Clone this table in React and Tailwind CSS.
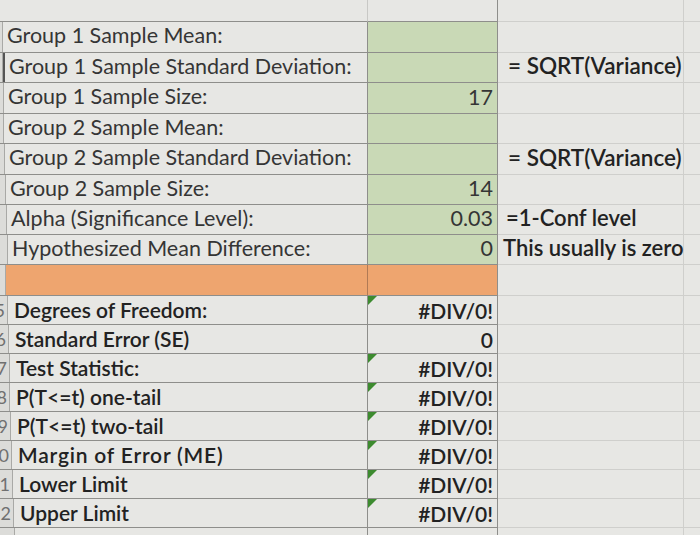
import React from "react";

const topRows = [
  { hw: "w-[3px]", label: "Group 1 Sample Mean:", value: "", note: "", h: "h-[31px]", sel: false },
  { hw: "w-[3px]", label: "Group 1 Sample Standard Deviation:", value: "", note: "= SQRT(Variance)", nc: "text-[22.5px] pl-[10px]", h: "h-[30px]", sel: true },
  { hw: "w-[4px]", label: "Group 1 Sample Size:", value: "17", note: "", h: "h-[31px]" },
  { hw: "w-[4px]", label: "Group 2 Sample Mean:", value: "", note: "", h: "h-[30px]" },
  { hw: "w-[5px]", label: "Group 2 Sample Standard Deviation:", value: "", note: "= SQRT(Variance)", nc: "text-[22.5px] pl-[10px]", h: "h-[31px]" },
  { hw: "w-[6px]", label: "Group 2 Sample Size:", value: "14", note: "", h: "h-[30px]" },
  { hw: "w-[7px]", label: "Alpha (Significance Level):", value: "0.03", note: "=1-Conf level", nc: "text-[22px] pl-[8px]", h: "h-[30px]" },
  { hw: "w-[8px]", label: "Hypothesized Mean Difference:", value: "0", note: "This usually is zero", nc: "text-[22px] pl-[5px]", h: "h-[30px]" },
];

const bottomRows = [
  { hw: "w-[8px]", d: "5", label: "Degrees of Freedom:", value: "#DIV/0!", tri: true },
  { hw: "w-[9px]", d: "6", label: "Standard Error (SE)", value: "0", tri: false },
  { hw: "w-[10px]", d: "7", label: "Test Statistic:", value: "#DIV/0!", tri: true },
  { hw: "w-[10px]", d: "8", label: "P(T<=t) one-tail", value: "#DIV/0!", tri: true },
  { hw: "w-[11px]", d: "9", label: "P(T<=t) two-tail", value: "#DIV/0!", tri: true },
  { hw: "w-[12px]", d: "0", label: "Margin of Error (ME)", value: "#DIV/0!", tri: true, lc: "tracking-[0.8px]" },
  { hw: "w-[13px]", d: "1", label: "Lower Limit", value: "#DIV/0!", tri: true },
  { hw: "w-[14px]", d: "2", label: "Upper Limit", value: "#DIV/0!", tri: true },
  { hw: "w-[15px]", d: "3", label: "", value: "", tri: false },
];

function Header({ hw, d }) {
  return (
    <span className={`${hw} shrink-0 h-full overflow-hidden bg-[#dcdcd9] border-r border-[#a9a9a6] flex items-center justify-end pr-[2px] text-[18px] leading-none text-[#707070]`}>
      {d ? <span className="shrink-0">{d}</span> : null}
    </span>
  );
}

export default function App() {
  return (
    <div className="w-[700px] h-[535px] overflow-hidden bg-[#e7e7e4] font-['Lato','Liberation_Sans',sans-serif] text-[#353535]">
      {/* top blank row */}
      <div className="grid grid-cols-[367px_131px_186px_1fr] h-[22px]">
        <div className="border-b border-[#8e8e8b]" />
        <div className="border-b border-l border-r border-[#8e8e8b] border-l-[#c8c8c5]" />
        <div className="border-b border-r border-[#cfcfcc]" />
        <div className="border-b border-[#cfcfcc]" />
      </div>

      {topRows.map((r, i) => (
        <div key={i} className={`grid grid-cols-[367px_131px_186px_1fr] ${r.h}`}>
          <div className="flex h-full border-b border-[#8e8e8b] overflow-hidden">
            <Header hw={r.hw} />
            <span className={`flex items-center pl-[4px] pb-[2px] text-[21.5px] leading-none whitespace-nowrap ${r.sel ? "border-l-2 border-[#555]" : ""}`}>
              {r.label}
            </span>
          </div>
          <div className="flex items-end justify-end pr-[4px] pb-[5px] bg-[#c9d9b6] border-l border-r border-b border-[#8e8e8b] text-[21.5px] leading-none">
            {r.value}
          </div>
          <div className={`flex items-end pb-[5px] border-b border-r border-[#cfcfcc] leading-none font-semibold text-[#222] whitespace-nowrap ${r.nc || ""}`}>
            {r.note}
          </div>
          <div className="border-b border-[#cfcfcc]" />
        </div>
      ))}

      {/* orange row */}
      <div className="grid grid-cols-[367px_131px_186px_1fr] h-[31px]">
        <div className="flex h-full border-b border-[#8e8e8b]">
          <Header hw="w-[6px]" />
          <span className="flex-1 bg-[#eea56f]" />
        </div>
        <div className="bg-[#eea56f] border-l border-r border-b border-[#8e8e8b] border-l-[#b07a55]" />
        <div className="border-b border-r border-[#cfcfcc]" />
        <div className="border-b border-[#cfcfcc]" />
      </div>

      {bottomRows.map((r, i) => (
        <div key={i} className="grid grid-cols-[367px_131px_186px_1fr] h-[29px]">
          <div className="flex h-full border-b border-[#8e8e8b] overflow-hidden">
            <Header hw={r.hw} d={r.d} />
            <span className={`flex items-center pl-[6px] pb-[2px] text-[21px] leading-none font-semibold text-[#222] whitespace-nowrap ${r.lc || ""}`}>
              {r.label}
            </span>
          </div>
          <div className="relative flex items-end justify-end pr-[4px] pb-[3px] border-l border-r border-b border-[#8e8e8b] text-[21px] leading-none font-semibold text-[#222]">
            {r.tri ? (
              <span className="absolute top-0 left-0 w-0 h-0 border-t-[9px] border-r-[9px] border-t-[#3d8b2f] border-r-transparent" />
            ) : null}
            {r.value}
          </div>
          <div className="border-b border-r border-[#cfcfcc]" />
          <div className="border-b border-[#cfcfcc]" />
        </div>
      ))}
    </div>
  );
}
